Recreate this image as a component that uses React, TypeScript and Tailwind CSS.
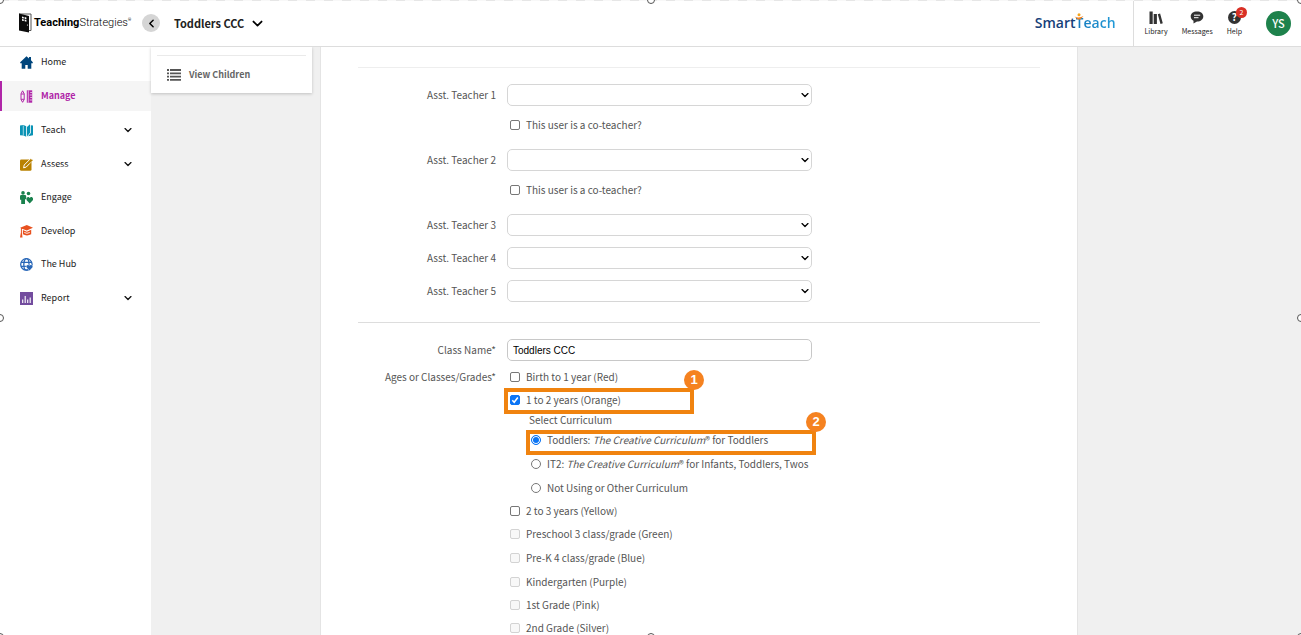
import React, { useId } from 'react';

const SANS = "font-['Noto_Sans_CJK_SC','Noto_Sans',sans-serif]";

function Chevron({ className = '' }: { className?: string }) {
  return (
    <svg viewBox="0 0 10 10" className={className} fill="none" stroke="currentColor" strokeWidth="1.6" strokeLinecap="round" strokeLinejoin="round" aria-hidden="true">
      <path d="M1.3 3.200 5 6.900 8.700 3.200" />
    </svg>
  );
}

function TeachingLogo() {
  return (
    <a href="#home" className="flex w-[123px] shrink-0 items-center gap-[2px] text-black">
      <svg viewBox="0 0 13 20" className="h-5 w-[13px] shrink-0" aria-hidden="true">
        <path d="M0 1h12v16.500h-2" fill="none" stroke="#555" strokeWidth="1" />
        <path d="M0 .5 10 3v16.500L0 17.500z" fill="#0b0b0b" />
        <path d="M3 3.500l1.800.4v1.700L3 5.200zM5.600 4.100l1.800.4v1.700l-1.800-.4zM3 6l1.800.4v1.700L3 7.700zM5.600 6.600l1.800.4v1.700l-1.800-.4z" fill="#fff" />
        <circle cx="8.500" cy="12" r=".6" fill="#fff" />
      </svg>
      <span className="flex items-center font-['Roboto',sans-serif] text-[11px] leading-4">
        <b className="font-bold">Teaching</b>
        <span className="font-light">Strategies</span>
        <span className="self-start text-[4px] leading-[10px]">®</span>
      </span>
    </a>
  );
}

const icons: Record<string, React.ReactNode> = {
  Home: (
    <g fill="#00457c">
      <path d="M6.500.3.2 6.200v1h1.500v5.500h3.600V9h2.400v3.700h3.600V7.200h1.500v-1L11 4.300V1H9v1.500z" />
    </g>
  ),
  Manage: (
    <g fill="none" stroke="#b026a8">
      <path d="M1 3.800 2.600.8l1.600 3v5.700L2.600 12.300 1 9.500zM1 4h3.200M1 9.300h3.200" strokeWidth="1" />
      <path d="M6.800.3h5.400v12.400H6.800z" fill="#b026a8" stroke="none" />
      <path d="M8.300.3v12.400M10.200 2.500h2M9.700 5h2.500M10.200 7.500h2M9.700 10h2.500" stroke="#f6f6f6" strokeWidth=".7" />
    </g>
  ),
  Teach: (
    <g fill="#0a93b5">
      <path d="M0 1.500 3.500 1l2.700 1.200v10.600L3.500 11.600 0 11.300zM7 3l3-2.700v8.500l-3 3.800zM10.800 1.200l2.200.3v9.800l-5 1 2.800-3.300z" />
      <path d="M3.300 1.500v9.800" stroke="#fff" strokeWidth=".6" />
    </g>
  ),
  Assess: (
    <g>
      <rect x="0" y="1.500" width="11.500" height="11.300" rx="1.300" fill="#b98200" />
      <path d="m3.600 9.900.6-2.900L10.700.5l2 1.900-6.400 6.600z" fill="#b98200" stroke="#fff" strokeWidth="1" />
      <path d="m8.500 4.500 3.300-3.200 1 .9-3.300 3.300z" fill="#b98200" />
    </g>
  ),
  Engage: (
    <g fill="#19814d">
      <circle cx="3" cy="1.900" r="1.800" />
      <circle cx="8.500" cy="2.500" r="1.800" />
      <path d="M0 5.400q0-1.400 1.200-1.400h3.600q1.400 0 1.400 1.400v2.800H5v4.800H1.200V8.700H0z" />
      <path d="m9.700 12.500-3-3.300C5.800 7.500 7.200 5.600 9 6.200l.7.7.8-.7c1.800-.6 3.200 1.300 2.300 3z" />
    </g>
  ),
  Develop: (
    <g fill="#e8511f">
      <path d="M6.800 0 13 2.700 6.800 5.500 1.900 3.700V7.500l.6 5H0l.9-5V3.200L.2 2.700z" />
      <path d="M2.900 5v4.300q4 2.200 8.300 0V4.700L6.800 6.700z" />
      <path d="M4.300 7.500q2.500 1.600 5.500 0" stroke="#fff" strokeWidth=".9" fill="none" />
    </g>
  ),
  'The Hub': (
    <g fill="none" stroke="#2967b8" strokeWidth="1.300">
      <circle cx="6.400" cy="6.400" r="5.700" />
      <ellipse cx="6.400" cy="6.400" rx="2.600" ry="5.700" />
      <path d="M1 4.300h11M1 8.300h11" />
      <path d="m9.500 12.800-3-3.300c-1-2 1-3.800 3-2.200 2-1.600 4 .2 3 2.200z" fill="#2967b8" stroke="#fff" strokeWidth=".5" />
    </g>
  ),
  Report: (
    <g>
      <path d="M0 0h13v13H0z" fill="#734c9e" />
      <path d="M2.700 7.500V11M5.200 4v7M7.700 7.500V11M10.200 5.500V11" stroke="#fff" strokeWidth="1.100" />
    </g>
  ),
};

function NavItem({ name, active = false, expandable = false }: { name: string; active?: boolean; expandable?: boolean }) {
  return (
    <li>
      <a
        href={'#' + name.toLowerCase().replace(' ', '-')}
        className={
          'flex h-[30px] items-center gap-2 border-l-2 pr-[19px] pl-[18px] text-[9px] leading-[14px] ' +
          (active ? 'border-[#b026a8] bg-[#f5f5f5] font-bold text-[#b026a8]' : 'border-transparent text-[#222]')
        }
      >
        <svg viewBox="0 0 13 13" className="size-[13px] shrink-0" aria-hidden="true">{icons[name]}</svg>
        <span className="flex-1">{name}</span>
        {expandable && <Chevron className="size-[8px] text-[#111]" />}
      </a>
    </li>
  );
}

function Row({ label, htmlFor, children }: { label?: string; htmlFor?: string; children: React.ReactNode }) {
  return (
    <div className="grid grid-cols-[138px_minmax(0,305px)] items-center gap-x-[11px]">
      {label ? <label htmlFor={htmlFor} className="text-right whitespace-nowrap">{label}</label> : <span />}
      {children}
    </div>
  );
}

function Teacher({ n }: { n: number }) {
  const id = useId();
  return (
    <Row label={'Asst. Teacher ' + n} htmlFor={id}>
      <div className="relative">
        <select id={id} className="block h-[22px] w-full appearance-none rounded-[5px] border border-[#d6d6d6] bg-white px-1">
          <option></option>
        </select>
        <Chevron className="pointer-events-none absolute top-1/2 right-[3px] size-[8px] -translate-y-1/2 text-black" />
      </div>
    </Row>
  );
}

function Tick({ label, checked = false, disabled = false }: { label: string; checked?: boolean; disabled?: boolean }) {
  return (
    <label className="flex items-center gap-[6px] whitespace-nowrap">
      <span className="relative size-[10px] shrink-0">
        <input
          type="checkbox"
          defaultChecked={checked}
          disabled={disabled}
          className="peer block size-[10px] appearance-none rounded-[2px] border border-[#777] bg-white checked:border-[#0b75f5] checked:bg-[#0b75f5] disabled:border-[#d3d3d3] disabled:bg-[#f8f8f8]"
        />
        <svg viewBox="0 0 10 10" className="pointer-events-none absolute inset-0 hidden size-[10px] peer-checked:block" fill="none" stroke="#fff" strokeWidth="1.500" aria-hidden="true">
          <path d="m2.300 5.300 1.900 2 3.600-4.800" />
        </svg>
      </span>
      <span>{label}</span>
    </label>
  );
}

function Choice({ children, checked = false }: { children: React.ReactNode; checked?: boolean }) {
  return (
    <label className="flex items-center gap-[6px] whitespace-nowrap">
      <input
        type="radio"
        name="curriculum"
        defaultChecked={checked}
        className="block size-[10px] shrink-0 appearance-none rounded-full border border-[#777] bg-white checked:border-[#0b75f5] checked:bg-[#0b75f5] checked:shadow-[inset_0_0_0_1px_#fff]"
      />
      <span>{children}</span>
    </label>
  );
}

function Marker({ n }: { n: number }) {
  return (
    <span className="absolute -top-[22px] -right-[14px] flex size-5 items-center justify-center rounded-full bg-[#f58220] font-['Liberation_Sans',sans-serif] text-[13px] font-bold text-white">
      {n}
    </span>
  );
}

function Handle({ className }: { className: string }) {
  return <span aria-hidden="true" className={'absolute z-20 size-2 rounded-full border-[1.5px] border-[#555] bg-white ' + className} />;
}

const tool = 'flex flex-col items-center gap-[3px] text-[7px] leading-[9px] text-[#222]';

export default function App() {
  return (
    <div className={SANS + ' relative flex h-screen flex-col overflow-hidden bg-white text-[10px] leading-4 text-[#555]'}>
      <div aria-hidden="true" className="absolute inset-x-0 top-0 z-20 h-px bg-[repeating-linear-gradient(90deg,#e6e6e6_0_9px,#f8f8f8_9px_18px)]" />
      <header className="relative z-10 flex h-[47px] shrink-0 items-center border-b border-[#ddd] bg-white pl-[19px]">
        <TeachingLogo />
        <button aria-label="Collapse menu" className="flex size-[18px] items-center justify-center rounded-full bg-[#d5d5d5] text-black">
          <Chevron className="size-[9px] rotate-90" />
        </button>
        <button className="ml-[14px] flex items-center gap-2 text-[11px] font-bold text-[#222]">
          Toddlers CCC
          <Chevron className="size-[11px] text-black" />
        </button>
        <a href="#smartteach" className="relative ml-auto pr-[17px] font-['Open_Sans',sans-serif] text-[14px] leading-5 font-semibold text-[#173f79]">
          Smart<span className="bg-linear-to-r from-[#1479bd] to-[#239bd8] bg-clip-text text-transparent">Teach</span>
          <svg viewBox="0 0 12 8" className="absolute top-0 left-[38px] h-2 w-3" aria-hidden="true">
            <circle cx="6" cy="1.700" r="1.500" fill="#f6a51c" />
            <path d="M1.500 3.500q4.500 2 9-.5L7.300 6.500H4.800z" fill="#f58220" />
          </svg>
        </a>
        <div className="flex h-full items-center border-l border-[#ddd] pr-[10px] pl-[11px]">
          <button className={tool}>
            <svg viewBox="0 0 14 13" className="h-[13px] w-[14px]" fill="#333" aria-hidden="true">
              <path d="M.5.500h3.200v12.500H.5zM4.700 3h3.200v10H4.700zM8.800 3.300l2.300-.8 2.700 9.700-2.300.8z" />
            </svg>
            Library
          </button>
          <button className={tool + ' ml-[14px]'}>
            <svg viewBox="0 0 14 13" className="h-[13px] w-[14px]" aria-hidden="true">
              <path d="M7 .5c3.700 0 6.300 2 6.300 4.900s-2.600 5-6.300 5L3.500 12.500v-2.800C1.800 8.800.7 7.300.7 5.400.7 2.500 3.300.5 7 .5z" fill="#333" />
              <path d="M4 4.200h6.200M4 6.700h4.500" stroke="#fff" strokeWidth="1" />
            </svg>
            Messages
          </button>
          <button className={tool + ' relative ml-[14px]'}>
            <span className="flex size-[13px] items-center justify-center rounded-full bg-[#333] text-[10px] leading-none font-bold text-white">?</span>
            Help
            <span className="absolute -top-1 -right-[5px] flex size-[11px] items-center justify-center rounded-full bg-[#d93025] text-[7px] text-white">2</span>
          </button>
          <button className="ml-6 flex size-[25px] items-center justify-center rounded-full bg-[#1e824c] text-[11px] font-medium text-white">YS</button>
        </div>
      </header>

      <div className="flex min-h-0 flex-1">
        <nav className="flex w-[151px] shrink-0 flex-col gap-[3px]">
          <ul className="flex flex-col gap-1">
            <NavItem name="Home" />
            <NavItem name="Manage" active />
            <NavItem name="Teach" expandable />
            <NavItem name="Assess" expandable />
          </ul>
          <ul className="flex flex-col gap-1">
            <NavItem name="Engage" />
            <NavItem name="Develop" />
          </ul>
          <ul className="flex flex-col gap-1">
            <NavItem name="The Hub" />
            <NavItem name="Report" expandable />
          </ul>
        </nav>

        <div className="flex min-w-0 flex-1 bg-[#f0f0f0]">
          <aside className="w-[161px] shrink-0">
            <div className="bg-white px-[6px] pt-2 shadow-[0_1px_3px_rgba(0,0,0,0.2)]">
              <a href="#children" className="flex h-[38px] items-center gap-2 border-t border-[#eaeaea] pl-[10px] text-[9px] font-bold text-[#666]">
                <svg viewBox="0 0 14 12" className="h-3 w-[14px]" stroke="#555" strokeWidth="1.800" aria-hidden="true">
                  <path d="M0 1h2M3 1h11M0 4.300h2M3 4.300h11M0 7.600h2M3 7.600h11M0 10.900h2M3 10.900h11" />
                </svg>
                View Children
              </a>
            </div>
          </aside>

          <main className="ml-2 w-full max-w-[758px] overflow-hidden border-x border-[#e4e4e4] bg-white px-[37px] pt-5">
            <form>
              <section className="flex flex-col border-t border-[#eee] pt-4 pb-5">
                <Teacher n={1} />
                <div className="pt-[11px] pb-4">
                  <Row><div className="pl-[3px]"><Tick label="This user is a co-teacher?" /></div></Row>
                </div>
                <Teacher n={2} />
                <div className="pt-[11px] pb-4">
                  <Row><div className="pl-[3px]"><Tick label="This user is a co-teacher?" /></div></Row>
                </div>
                <div className="flex flex-col gap-[11px]">
                  <Teacher n={3} />
                  <Teacher n={4} />
                  <Teacher n={5} />
                </div>
              </section>

              <section className="border-t border-[#ddd] pt-4">
                <Row label="Class Name*" htmlFor="class-name">
                  <input id="class-name" type="text" defaultValue="Toddlers CCC" className="h-[22px] w-full rounded-[5px] border border-[#c8c8c8] bg-white px-[5px] font-['Liberation_Sans',sans-serif] text-[10px] text-black" />
                </Row>
                <div role="group" aria-labelledby="ages-label" className="mt-2 grid grid-cols-[138px_minmax(0,1fr)] gap-x-[11px]">
                  <span id="ages-label" className="text-right whitespace-nowrap">Ages or Classes/Grades*</span>
                  <div className="flex flex-col gap-2 pl-[3px]">
                    <div className="flex flex-col gap-[7px]">
                      <Tick label="Birth to 1 year (Red)" />
                      <div className="relative -mt-1 -mb-[6px] -ml-[6px] w-[190px] border-4 border-[#f0830f] px-[2px] pt-px pb-[3px] leading-[14px]">
                        <Tick label="1 to 2 years (Orange)" checked />
                        <Marker n={1} />
                      </div>
                      <div className="-mt-[3px] flex flex-col gap-2 pl-[21px]">
                        <p className="-mb-1 -ml-[2px]">Select Curriculum</p>
                        <div className="relative -mt-[2px] -mb-[7px] -ml-[5px] w-[290px] border-4 border-[#f0830f] px-px pb-[5px] leading-3">
                          <Choice checked>Toddlers: <i>The Creative Curriculum</i>® for Toddlers</Choice>
                          <Marker n={2} />
                        </div>
                        <Choice>IT2: <i>The Creative Curriculum</i>® for Infants, Toddlers, Twos</Choice>
                        <Choice>Not Using or Other Curriculum</Choice>
                      </div>
                      <Tick label="2 to 3 years (Yellow)" />
                      <Tick label="Preschool 3 class/grade (Green)" disabled />
                    </div>
                    <Tick label="Pre-K 4 class/grade (Blue)" disabled />
                    <div className="flex flex-col gap-[7px]">
                      <Tick label="Kindergarten (Purple)" disabled />
                      <Tick label="1st Grade (Pink)" disabled />
                      <Tick label="2nd Grade (Silver)" disabled />
                    </div>
                  </div>
                </div>
              </section>
            </form>
          </main>
        </div>
      </div>

      <Handle className="-top-1 -left-1" />
      <Handle className="-top-1 left-1/2 -translate-x-1/2" />
      <Handle className="-top-1 -right-1" />
      <Handle className="top-1/2 -left-1 -translate-y-1/2" />
      <Handle className="top-1/2 -right-1 -translate-y-1/2" />
      <Handle className="-bottom-[6px] -left-1" />
      <Handle className="-bottom-[6px] left-1/2 -translate-x-1/2" />
      <Handle className="-right-1 -bottom-[6px]" />
    </div>
  );
}
